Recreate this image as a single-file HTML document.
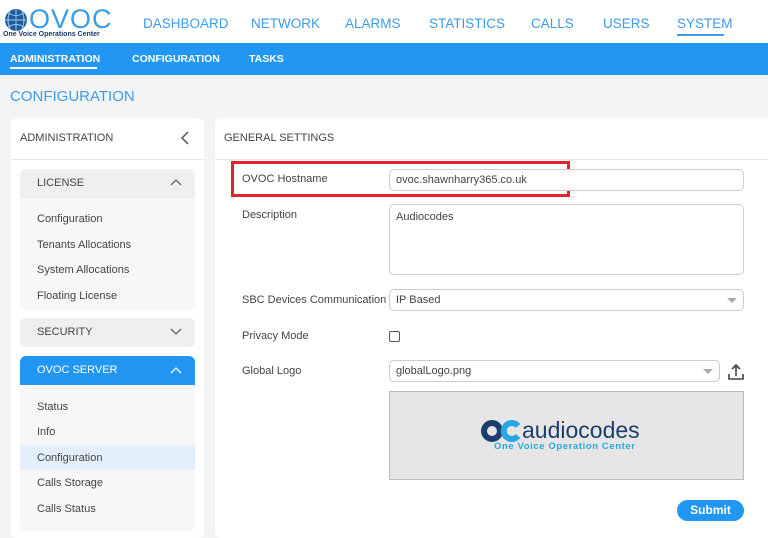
<!DOCTYPE html>
<html><head><style>
*{box-sizing:border-box;margin:0;padding:0}
body{width:768px;height:531px;overflow:hidden;background:#f3f4f6;font-family:"Liberation Sans",sans-serif;position:relative;color:#333}
.a{position:absolute}
.nav{font-size:13.5px;color:#3d9be9;top:16px}
.sub{font-size:10.5px;color:#fff;font-weight:bold;top:53px}
.item{font-size:11px;color:#444;left:37px}
.lbl{font-size:11px;color:#444;left:242px}
.inp{border:1px solid #ccc;border-radius:5px;background:#fff;font-size:11px;color:#444;padding-left:6px}
.caret{position:absolute;right:6px;top:8px;width:0;height:0;border-left:5px solid transparent;border-right:5px solid transparent;border-top:5px solid #aaa}
</style></head><body>
<div class="a" style="left:0;top:0;width:768px;height:43px;background:#fff"></div>
<svg class="a" style="left:4px;top:8px" width="24" height="24" viewBox="0 0 24 24"><circle cx="12" cy="12" r="11" fill="#1e5d9c"/><path d="M1 12h22M12 1v22M4 5q8 5 16 0M4 19q8-5 16 0M6 3q-4 9 0 18M18 3q4 9 0 18" stroke="#9cc7ee" stroke-width="1" fill="none"/></svg>
<div class="a" style="left:29px;top:5px;font-size:27px;color:#3a9ee6;letter-spacing:1px;line-height:28px">OVOC</div>
<div class="a" style="left:3px;top:31px;font-size:7px;color:#1b3b6a;font-weight:bold">One Voice Operations Center</div>
<div class="a nav" style="left:143px">DASHBOARD</div>
<div class="a nav" style="left:251px">NETWORK</div>
<div class="a nav" style="left:345px">ALARMS</div>
<div class="a nav" style="left:429px">STATISTICS</div>
<div class="a nav" style="left:531px">CALLS</div>
<div class="a nav" style="left:603px">USERS</div>
<div class="a nav" style="left:677px">SYSTEM</div>
<div class="a" style="left:677px;top:34px;width:47px;height:2px;background:#3d9be9"></div>
<div class="a" style="left:0;top:43px;width:768px;height:32px;background:#2196f3"></div>
<div class="a sub" style="left:10px">ADMINISTRATION</div>
<div class="a" style="left:10px;top:67px;width:87px;height:2px;background:#fff"></div>
<div class="a sub" style="left:132px">CONFIGURATION</div>
<div class="a sub" style="left:249px">TASKS</div>
<div class="a" style="left:10px;top:88px;font-size:15px;color:#3d9be9">CONFIGURATION</div>

<div class="a" style="left:11px;top:118px;width:193px;height:420px;background:#fff;border-radius:6px"></div>
<div class="a" style="left:20px;top:132px;font-size:11px;color:#444">ADMINISTRATION</div>
<svg class="a" style="left:180px;top:131px" width="10" height="14"><path d="M8 1L2 7l6 6" stroke="#555" stroke-width="1.5" fill="none"/></svg>
<div class="a" style="left:11px;top:159px;width:193px;height:1px;background:#e8e8e8"></div>
<div class="a" style="left:20px;top:169px;width:175px;height:141px;background:#f7f7f7;border-radius:6px"></div>
<div class="a" style="left:20px;top:169px;width:175px;height:29px;background:#efefef;border-radius:6px 6px 0 0"></div>
<div class="a" style="left:37px;top:177px;font-size:11px;color:#444">LICENSE</div>
<svg class="a" style="left:170px;top:178px" width="12" height="8"><path d="M1 7l5-5 5 5" stroke="#666" stroke-width="1.3" fill="none"/></svg>
<div class="a item" style="top:213px">Configuration</div>
<div class="a item" style="top:239px">Tenants Allocations</div>
<div class="a item" style="top:264px">System Allocations</div>
<div class="a item" style="top:290px">Floating License</div>
<div class="a" style="left:20px;top:318px;width:175px;height:29px;background:#efefef;border-radius:6px"></div>
<div class="a" style="left:37px;top:326px;font-size:11px;color:#444">SECURITY</div>
<svg class="a" style="left:170px;top:328px" width="12" height="8"><path d="M1 1l5 5 5-5" stroke="#666" stroke-width="1.3" fill="none"/></svg>
<div class="a" style="left:20px;top:356px;width:175px;height:175px;background:#f7f7f7;border-radius:6px"></div>
<div class="a" style="left:20px;top:356px;width:175px;height:29px;background:#2196f3;border-radius:6px 6px 0 0"></div>
<div class="a" style="left:37px;top:364px;font-size:11px;color:#fff">OVOC SERVER</div>
<svg class="a" style="left:170px;top:366px" width="12" height="8"><path d="M1 7l5-5 5 5" stroke="#fff" stroke-width="1.3" fill="none"/></svg>
<div class="a item" style="top:401px">Status</div>
<div class="a item" style="top:426px">Info</div>
<div class="a" style="left:20px;top:445px;width:175px;height:25px;background:#e3f0fc"></div>
<div class="a item" style="top:452px">Configuration</div>
<div class="a item" style="top:477px">Calls Storage</div>
<div class="a item" style="top:503px">Calls Status</div>

<div class="a" style="left:215px;top:118px;width:560px;height:420px;background:#fff;border-radius:6px"></div>
<div class="a" style="left:224px;top:132px;font-size:11px;color:#444">GENERAL SETTINGS</div>
<div class="a" style="left:215px;top:159px;width:553px;height:1px;background:#e8e8e8"></div>
<div class="a" style="left:231px;top:161px;width:339px;height:36px;border:3px solid #e8202a"></div>
<div class="a lbl" style="top:173px">OVOC Hostname</div>
<div class="a inp" style="left:389px;top:169px;width:355px;height:22px;line-height:20px">ovoc.shawnharry365.co.uk</div>
<div class="a lbl" style="top:209px">Description</div>
<div class="a inp" style="left:389px;top:204px;width:355px;height:71px;padding-top:6px">Audiocodes</div>
<div class="a lbl" style="top:294px">SBC Devices Communication</div>
<div class="a inp" style="left:389px;top:289px;width:355px;height:22px;line-height:20px">IP Based<span class="caret"></span></div>
<div class="a lbl" style="top:330px">Privacy Mode</div>
<div class="a" style="left:389px;top:331px;width:11px;height:11px;border:1px solid #555;border-radius:2px"></div>
<div class="a lbl" style="top:365px">Global Logo</div>
<div class="a inp" style="left:389px;top:360px;width:331px;height:22px;line-height:20px">globalLogo.png<span class="caret"></span></div>
<svg class="a" style="left:727px;top:362px" width="18" height="20"><path d="M9 14V3M5 7l4-4 4 4M2 12v5h14v-5" stroke="#444" stroke-width="1.6" fill="none"/></svg>
<div class="a" style="left:389px;top:391px;width:355px;height:89px;background:#e6e6e6;border:1px solid #bbb"></div>
<svg class="a" style="left:480px;top:418px" width="44" height="28"><circle cx="12" cy="13" r="8" fill="none" stroke="#1c3d6d" stroke-width="6"/><path d="M38 8a8 8 0 1 0 0 10" fill="none" stroke="#27a8e0" stroke-width="6"/></svg>
<div class="a" style="left:522px;top:416px;font-size:23px;color:#1c3d6d;line-height:28px">audiocodes</div>
<div class="a" style="left:494px;top:441px;font-size:9.5px;color:#27a8e0;font-weight:bold;letter-spacing:0.6px">One Voice Operation Center</div>
<div class="a" style="left:677px;top:500px;width:67px;height:21px;background:#2196f3;border-radius:11px;color:#fff;font-size:12px;font-weight:bold;text-align:center;line-height:21px">Submit</div>
</body></html>
